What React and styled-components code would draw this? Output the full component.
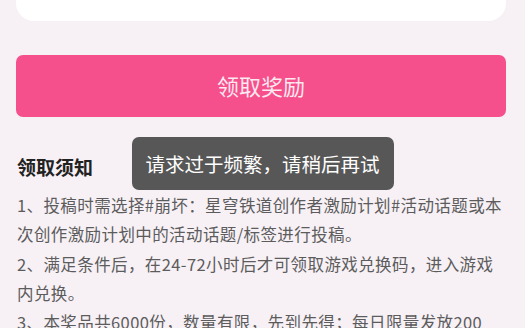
import React from "react";
import styled, { createGlobalStyle } from "styled-components";

const GlobalStyle = createGlobalStyle`
  html, body {
    margin: 0;
    padding: 0;
    background: #f7f1f6;
    overflow: hidden;
  }
  body {
    font-family: "Noto Sans CJK SC", "Noto Sans", sans-serif;
  }
`;

const notes = [
  "1、投稿时需选择#崩坏：星穹铁道创作者激励计划#活动话题或本次创作激励计划中的活动话题/标签进行投稿。",
  "2、满足条件后，在24-72小时后才可领取游戏兑换码，进入游戏内兑换。",
  "3、本奖品共6000份，数量有限，先到先得；每日限量发放200份，当日发完即止。",
];

export default function App() {
  return (
    <>
      <GlobalStyle />
      <Page>
        <InfoCard>
          <InfoRow>
            <InfoText>累计有效投稿</InfoText>
            <InfoText>0 / 1 篇</InfoText>
          </InfoRow>
        </InfoCard>
        <ClaimButton>领取奖励</ClaimButton>
        <NoticeTitle>领取须知</NoticeTitle>
        <NoticeList>
          {notes.map((n) => (
            <NoticeItem key={n}>{n}</NoticeItem>
          ))}
        </NoticeList>
        <Toast>请求过于频繁，请稍后再试</Toast>
      </Page>
    </>
  );
}

const Page = styled.div`
  position: relative;
  height: 328px;
  overflow: hidden;
  padding: 0 19px 0 16px;
`;

const InfoCard = styled.div`
  margin-top: -40px;
  height: 61px;
  background: #ffffff;
  border-radius: 18px;
  box-sizing: border-box;
  padding: 17px 28px 0 29px;
`;

const InfoRow = styled.div`
  display: flex;
  justify-content: space-between;
  padding-right: 40px;
`;

const InfoText = styled.span`
  font-size: 17px;
  line-height: 24px;
  color: #8a8a8a;
`;

const ClaimButton = styled.button`
  display: block;
  margin-top: 34px;
  height: 62px;
  width: 100%;
  border: none;
  border-radius: 7px;
  background: #f6508c;
  color: rgba(255, 255, 255, 0.88);
  font-family: inherit;
  font-size: 22px;
  line-height: 28px;
  cursor: pointer;
  padding: 0 0 3px;
`;

const NoticeTitle = styled.div`
  margin-top: 36px;
  padding-left: 1px;
  font-size: 19px;
  line-height: 28px;
  font-weight: 700;
  color: #222222;
`;

const NoticeList = styled.div`
  margin-top: 10px;
  padding-left: 1px;
  padding-right: 4px;
`;

const NoticeItem = styled.p`
  margin: 0;
  font-size: 16.5px;
  line-height: 29.3px;
  letter-spacing: 0.4px;
  color: #5c5c5c;
`;

const Toast = styled.div`
  position: absolute;
  top: 137px;
  left: 50%;
  transform: translateX(-50%);
  height: 53px;
  padding: 0 14px;
  display: flex;
  align-items: center;
  background: rgba(70, 70, 70, 0.9);
  border-radius: 7px;
  color: #ffffff;
  font-size: 19.5px;
  white-space: nowrap;
`;
